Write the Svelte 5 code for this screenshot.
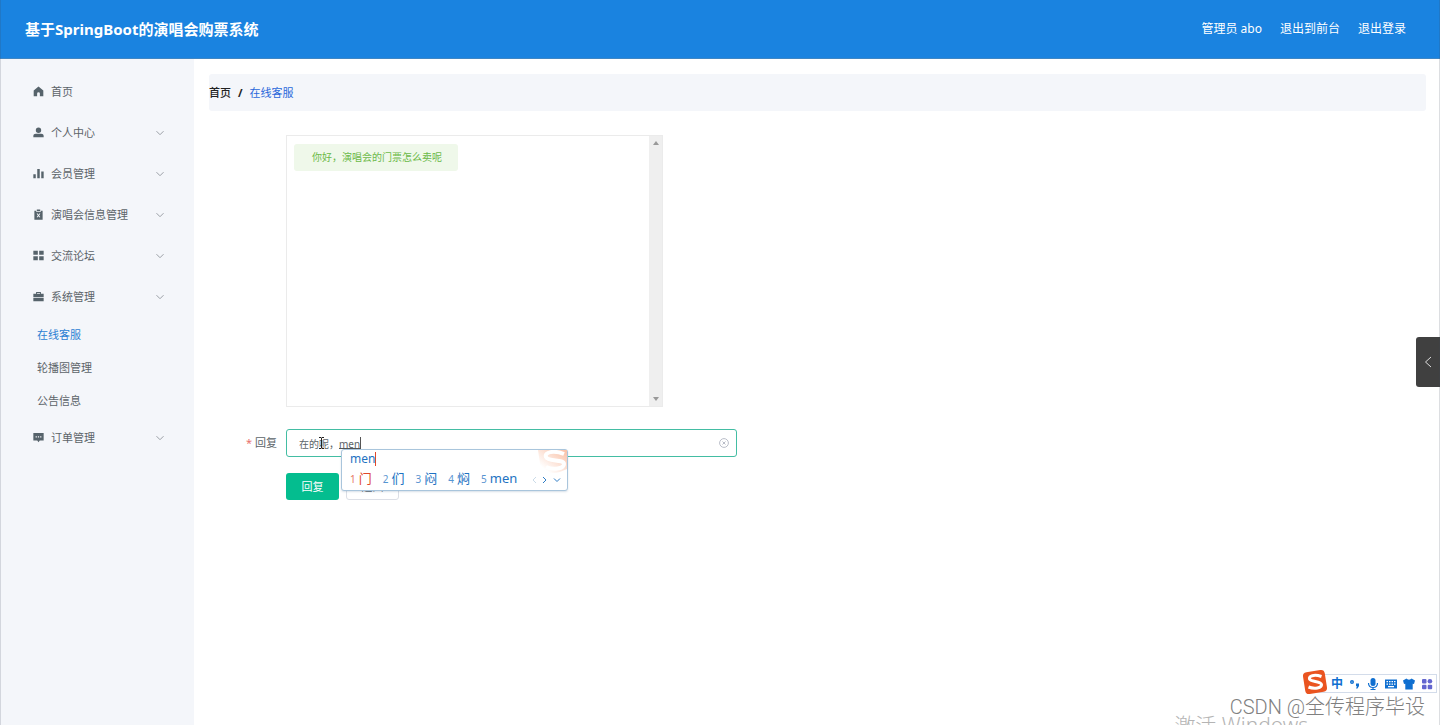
<script>
  let reply = $state("在的呢，men");
  let systemOpen = $state(true);

  const menu = [
    { icon: "home", label: "首页" },
    { icon: "user", label: "个人中心", arrow: true },
    { icon: "chart", label: "会员管理", arrow: true },
    { icon: "clipboard", label: "演唱会信息管理", arrow: true },
    { icon: "grid", label: "交流论坛", arrow: true },
    {
      icon: "case",
      label: "系统管理",
      arrow: true,
      children: ["在线客服", "轮播图管理", "公告信息"],
    },
    { icon: "chat", label: "订单管理", arrow: true },
  ];

  const icons = {
    home: "M8 .8 15 6.500v8.300H10V11a2 2 0 0 0-4 0v3.800H1V6.500z",
    user: "M8 .8a3.900 3.900 0 1 1 0 7.800 3.900 3.900 0 0 1 0-7.800zM.5 15v-2c0-2 1.500-3.200 3.500-3.200h8c2 0 3.500 1.200 3.500 3.200v2z",
    chart: "M.5 9H4v6H.5zM6.200 1.500h3.600V15H6.200zM12 5h3.500v10H12z",
    clipboard:
      "M2 2.500h2.500V4h7V2.500H14V15.500H2zM5.500 .8h5v2.200h-5zM5.300 7l1.900 2.300L5.300 11.600l1 .9L8 10.400l1.700 2.100 1-.9-1.900-2.300L10.700 7l-1-.9L8 8.200 6.300 6.100z",
    grid: "M.5 1h6.500v6H.5zM9 1h6.500v6H9zM.5 9h6.500v6H.5zM9 9h6.500v6H9z",
    case: "M4.500 4V1.500h7V4h4v5.200H.5V4zm1.400 0h4.200V2.900H5.900zM.5 10.200h15V15H.5z",
    chat: "M.5 1.500h15v11H9.800L8 15l-1.800-2.500H.5zM3.800 6v2h1.800V6zm3.300 0v2h1.800V6zm3.300 0v2h1.800V6z",
  };

  const candidates = ["门", "们", "闷", "焖", "men"];

  const toggle = (item) => {
    if (item.children) systemOpen = !systemOpen;
  };
</script>

<div class="app">
  <header class="header">
    <h1>基于SpringBoot的演唱会购票系统</h1>
    <nav class="header_links">
      <span>管理员 abo</span>
      <a href="#front">退出到前台</a>
      <a href="#logout">退出登录</a>
    </nav>
  </header>

  <div class="body">
    <aside class="sidebar">
      <ul>
        {#each menu as item}
          <li>
            <button class="menu_item" onclick={() => toggle(item)}>
              <svg class="menu_icon" viewBox="0 0 16 16">
                <path d={icons[item.icon]} fill-rule="evenodd" />
              </svg>
              <span>{item.label}</span>
              {#if item.arrow}
                <svg class="arrow" viewBox="0 0 8 8"><path d="M0.500 2.200 4 5.700 7.500 2.200" /></svg>
              {/if}
            </button>
            {#if item.children && systemOpen}
              <ul class="submenu">
                {#each item.children as child, i}
                  <li><a href="#sub{i}" class:active={i === 0}>{child}</a></li>
                {/each}
              </ul>
            {/if}
          </li>
        {/each}
      </ul>
    </aside>

    <main>
      <nav class="breadcrumb">
        <a href="#home">首页</a>
        <b>/</b>
        <span>在线客服</span>
      </nav>

      <form onsubmit={(e) => e.preventDefault()}>
        <div class="chat">
          <div class="messages">
            <p class="message">你好，演唱会的门票怎么卖呢</p>
          </div>
          <div class="scrollbar">
            <svg viewBox="0 0 6 4"><path d="M3 0 6 4H0z" /></svg>
            <svg viewBox="0 0 6 4"><path d="M0 0h6L3 4z" /></svg>
          </div>
        </div>

        <div class="form_row">
          <label for="reply"><i>*</i> 回复</label>
          <div class="field">
            <input id="reply" type="text" bind:value={reply} />
            <span class="composing"></span>
            <svg class="ibeam" viewBox="0 0 7 12">
              <path d="M1 .5h2l.5.5.500-.5h2M3.500 1v10M1 11.500h2l.5-.5.500.5h2" />
            </svg>
            <button type="button" class="clear" aria-label="清空" onclick={() => (reply = "")}>
              <svg viewBox="0 0 10 10">
                <circle cx="5" cy="5" r="4.400" />
                <path d="M3.500 3.500l3 3M6.500 3.500l-3 3" />
              </svg>
            </button>

            <div class="ime">
              <svg class="ime_mark" viewBox="0 0 30 24">
                <defs>
                  <linearGradient id="mark" x1="0" y1="1" x2="1" y2="0">
                    <stop offset="0.2" stop-color="#fff" />
                    <stop offset="1" stop-color="#f9bfa4" />
                  </linearGradient>
                </defs>
                <path class="tile" d="M1 0h29v19q-6 3-12 4Q4 24 3 14z" fill="url(#mark)" />
                <path d="M27 4C17 0 7 2 9 7s18 2 18 7-11 6-18 3" />
              </svg>
              <div class="ime_input">men</div>
              <ol>
                {#each candidates as word, i}
                  <li class:first={i === 0}><small>{i + 1}</small>{word}</li>
                {/each}
              </ol>
              <svg class="ime_pager" viewBox="0 0 30 8">
                <path class="off" d="M4 1 1 4l3 3" />
                <path d="M11 1l3 3-3 3M22 2.500l3 3 3-3" />
              </svg>
            </div>
          </div>
        </div>

        <div class="buttons">
          <button class="primary">回复</button>
          <button type="button" class="plain">返回</button>
        </div>
      </form>
    </main>
  </div>

  <button class="drawer" aria-label="展开">
    <svg viewBox="0 0 8 12"><path d="M7 1 1.500 6 7 11" /></svg>
  </button>

  <div class="activate">激活 Windows</div>

  <div class="ime_bar">
    <svg class="sogou" viewBox="0 0 26 26">
      <rect x="2" y="2" width="22" height="22" rx="4" transform="rotate(-9 13 13)" />
      <path d="M19.500 7.500C12 5 6.500 7 7.500 10s11.500 2 12 5.500-7 5-13 2.500" />
    </svg>
    <b>中</b>
    <svg viewBox="0 0 12 12">
      <circle cx="3" cy="4" r="1.300" fill="none" stroke="currentColor" stroke-width="1.400" />
      <path d="M7 5.500h3v2.500L8.500 10.500H7L8 8.200H7z" />
    </svg>
    <svg viewBox="0 0 12 12">
      <rect x="3.500" y="0" width="5" height="8" rx="2.500" />
      <path d="M1.500 5c0 6 9 6 9 0M6 9.500V12M3.500 11.500h5" fill="none" stroke="currentColor" stroke-width="1.200" />
    </svg>
    <svg viewBox="0 0 12 12">
      <path
        fill-rule="evenodd"
        d="M0 1.500h12v9H0zM1.500 3v1.300H3V3zm2.500 0v1.300h1.500V3zm2.500 0v1.300H8V3zM9 3v1.300h1.500V3zM1.500 5.400v1.300H3V5.400zm2.500 0v1.300h1.500V5.400zm2.500 0v1.300H8V5.400zm2.500 0v1.300h1.500V5.400zM3 8v1.200h6V8z"
      />
    </svg>
    <svg viewBox="0 0 12 12">
      <path d="M3.500 .5c1 1.500 4 1.500 5 0L12 2.500l-1 3.500-1.300-.3V11.500H2.300V5.700L1 6 0 2.500z" />
    </svg>
    <svg class="tools" viewBox="0 0 12 12">
      <rect x="1" y="1" width="4.500" height="4.500" rx="1" />
      <circle cx="8.900" cy="3.200" r="2.300" />
      <rect x="1" y="6.700" width="4.500" height="4.500" rx="1" />
      <rect x="6.700" y="6.700" width="4.500" height="4.500" rx="1" />
    </svg>
  </div>

  <div class="watermark">CSDN @全传程序毕设</div>
</div>

<style>
  :global(body) {
    margin: 0;
  }

  .app {
    position: relative;
    display: flex;
    flex-direction: column;
    min-height: 100vh;
    overflow: hidden;
    background: #fff;
    color: #5c6469;
    font: 11px/16px "Noto Sans", "Noto Sans CJK SC", sans-serif;
  }

  /* thin frame over both window edges */
  .app::after {
    content: "";
    position: absolute;
    inset: 0;
    border: solid rgba(60, 70, 90, 0.18);
    border-width: 0 1px;
    pointer-events: none;
  }

  a {
    color: inherit;
    text-decoration: none;
  }

  button {
    padding: 0;
    border: 0;
    font: inherit;
    cursor: pointer;
  }

  svg {
    display: block;
    flex: none;
  }

  ul,
  ol {
    margin: 0;
    padding: 0;
    list-style: none;
  }

  .header {
    display: flex;
    align-items: center;
    justify-content: space-between;
    box-sizing: border-box;
    height: 59px;
    padding: 0 34px 0 25px;
    border-bottom: 1px solid #3f86c4;
    background: #1a83e0;
    color: #fff;
  }

  h1 {
    margin: 0;
    font-size: 15px;
    line-height: 24px;
  }

  .header_links {
    display: flex;
    gap: 18px;
    font-size: 12px;
  }

  .body {
    display: flex;
    flex: 1;
  }

  .sidebar {
    flex: none;
    width: 194px;
    padding-top: 12px;
    box-sizing: border-box;
    background: #f4f6fa;
  }

  .menu_item {
    display: flex;
    align-items: center;
    width: 100%;
    height: 41px;
    padding: 0 30px 0 33px;
    background: none;
    color: inherit;
    text-align: left;
  }

  .menu_icon {
    width: 11px;
    height: 11px;
    margin-right: 7px;
    fill: #56636b;
  }

  .arrow {
    width: 8px;
    height: 8px;
    margin-left: auto;
    fill: none;
    stroke: #9a9fa5;
  }

  .submenu {
    padding-top: 1px;
  }

  .submenu a {
    display: block;
    padding-left: 37px;
    line-height: 33px;
  }

  .submenu a.active {
    color: #2b80d3;
  }

  main {
    flex: 1;
    min-width: 0;
    padding: 15px 14px 15px 15px;
  }

  .breadcrumb {
    display: flex;
    align-items: center;
    gap: 7px;
    height: 37px;
    border-radius: 3px;
    background: #f4f6fa;
    color: #222;
  }

  .breadcrumb a {
    font-weight: 500;
  }

  .breadcrumb span {
    color: #2a68da;
  }

  form {
    padding: 24px 0 0 77px;
  }

  .chat {
    display: flex;
    justify-content: space-between;
    box-sizing: border-box;
    width: 377px;
    height: 272px;
    border: 1px solid #ebebeb;
  }

  .messages {
    padding: 8px 7px;
  }

  .message {
    margin: 0;
    padding: 0 16px 0 18px;
    border-radius: 3px;
    background: #eff8ea;
    color: #6cba49;
    font-size: 10px;
    line-height: 27px;
  }

  .scrollbar {
    display: flex;
    flex-direction: column;
    align-items: center;
    justify-content: space-between;
    width: 13px;
    padding: 5px 0;
    box-sizing: border-box;
    background: #efefef;
    fill: #999;
  }

  .scrollbar svg {
    width: 6px;
    height: 4px;
  }

  .form_row {
    display: flex;
    align-items: center;
    margin: 22px 0 16px -77px;
  }

  label {
    width: 68px;
    margin-right: 9px;
    text-align: right;
  }

  label i {
    color: #e8726c;
    font-style: normal;
  }

  .field {
    position: relative;
    width: 451px;
  }

  input {
    display: block;
    box-sizing: border-box;
    width: 100%;
    height: 28px;
    padding: 0 30px 0 12px;
    border: 1px solid #43bda3;
    border-radius: 3px;
    outline: 0;
    background: #fff;
    color: #5c6469;
    font: inherit;
    font-size: 10px;
  }

  .composing {
    position: absolute;
    top: 8px;
    left: 53px;
    width: 21px;
    height: 11px;
    border: solid #555;
    border-width: 0 1px 1px 0;
  }

  .ibeam {
    position: absolute;
    top: 8px;
    left: 32px;
    width: 7px;
    height: 12px;
    fill: none;
    stroke: #222;
  }

  .clear {
    position: absolute;
    top: 9px;
    right: 8px;
    background: none;
  }

  .clear svg {
    width: 10px;
    height: 10px;
    fill: none;
    stroke: #b9bdc8;
  }

  .ime {
    position: absolute;
    z-index: 1;
    top: 20px;
    left: 55px;
    box-sizing: border-box;
    width: 227px;
    height: 42px;
    padding: 0 8px;
    border: 1px solid #a9c5dc;
    border-radius: 3px;
    background: #fff;
    box-shadow: 0 1px 2px rgba(60, 100, 140, 0.2);
    color: #1d72c2;
    font-size: 13px;
  }

  .ime_mark {
    position: absolute;
    top: 0;
    right: 0;
    width: 30px;
    height: 24px;
  }

  .ime_mark path:not(.tile) {
    fill: none;
    stroke: #fff;
    stroke-width: 4;
  }

  .ime_input {
    width: fit-content;
    margin-top: 2px;
    border-right: 1px solid #e0482c;
    font-size: 12px;
    line-height: 14px;
  }

  ol {
    display: flex;
    gap: 11px;
    margin-top: 2px;
    line-height: 20px;
  }

  ol .first {
    color: #e0482c;
  }

  small {
    margin-right: 3px;
    font-size: 10px;
    opacity: 0.75;
  }

  .ime_pager {
    position: absolute;
    right: 5px;
    bottom: 6px;
    width: 30px;
    height: 8px;
    fill: none;
    stroke: #2e7cc5;
  }

  .ime_pager .off {
    stroke: #cbdbe8;
  }

  .buttons {
    display: flex;
    gap: 7px;
  }

  .buttons button {
    width: 53px;
    height: 27px;
    border-radius: 3px;
  }

  .primary {
    background: #04bd8f;
    color: #fff;
  }

  .buttons .plain {
    border: 1px solid #dcdfe6;
    background: #fff;
    color: #5c6469;
  }

  .drawer {
    position: absolute;
    top: calc(50% - 26px);
    right: 0;
    display: flex;
    align-items: center;
    justify-content: center;
    width: 24px;
    height: 50px;
    border-radius: 3px 0 0 3px;
    background: #404040;
  }

  .drawer svg {
    width: 8px;
    height: 12px;
    fill: none;
    stroke: #ddd;
  }

  .ime_bar {
    position: absolute;
    right: 3px;
    bottom: 32px;
    display: flex;
    align-items: center;
    gap: 6px;
    box-sizing: border-box;
    height: 19px;
    padding-right: 3px;
    border: 1px solid #d3dcea;
    border-left: 0;
    background: #fff;
    color: #0f6fd0;
    fill: #0f6fd0;
    font-size: 12px;
  }

  .ime_bar svg {
    width: 12px;
    height: 12px;
  }

  .ime_bar .tools {
    fill: #6366cf;
  }

  .ime_bar .sogou {
    width: 26px;
    height: 26px;
    margin: -8px -3px -4px -13px;
    fill: #ea5420;
  }

  .sogou path {
    fill: none;
    stroke: #fff;
    stroke-width: 3;
  }

  .watermark {
    position: absolute;
    right: 15px;
    bottom: 5px;
    color: #808080;
    font: 300 20px/26px Roboto, "Noto Sans CJK SC", sans-serif;
  }

  .activate {
    position: absolute;
    right: 132px;
    bottom: -14px;
    color: #b4b4b4;
    font: 300 21px/28px "Noto Sans", "Noto Sans CJK SC", sans-serif;
  }
</style>
